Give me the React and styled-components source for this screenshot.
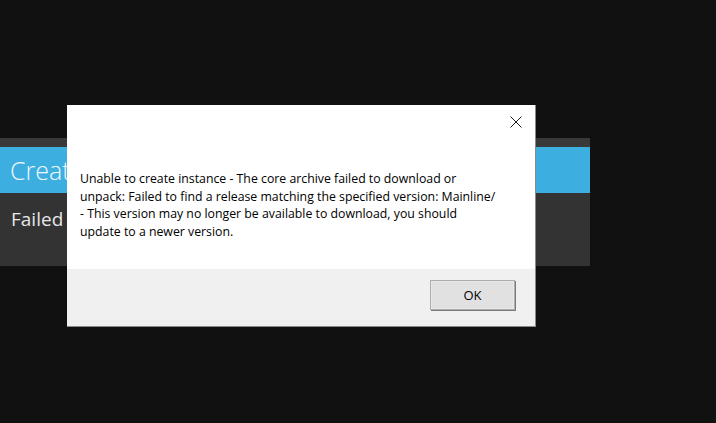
import React from "react";
import styled, { createGlobalStyle } from "styled-components";

const GlobalStyle = createGlobalStyle`
  html, body {
    margin: 0;
    padding: 0;
    background: #111111;
    overflow: hidden;
  }
`;

const Screen = styled.div`
  position: relative;
  width: 716px;
  height: 423px;
  background: #111111;
  padding-top: 138px;
  box-sizing: border-box;
`;

const Panel = styled.section`
  width: 590px;
  display: flex;
  flex-direction: column;
  font-family: "Open Sans", "Noto Sans", sans-serif;
`;

const TopStrip = styled.div`
  height: 9px;
  background: #393939;
`;

const TitleBar = styled.div`
  height: 46px;
  background: #3daee0;
  color: #eef8fd;
  font-size: 25px;
  font-weight: 300;
  line-height: 46px;
  padding-left: 10px;
  white-space: nowrap;
  overflow: hidden;
`;

const PanelBody = styled.div`
  height: 73px;
  background: #333333;
  color: #e6e6e6;
  font-size: 19px;
  padding: 14px 0 0 11px;
  box-sizing: border-box;
  line-height: 24px;
`;

const Dialog = styled.div`
  position: absolute;
  left: 67px;
  top: 105px;
  width: 469px;
  height: 222px;
  box-sizing: border-box;
  background: #ffffff;
  border-right: 1px solid #8a8a8a;
  border-bottom: 1px solid #8a8a8a;
  display: flex;
  flex-direction: column;
  font-family: "Open Sans", "Noto Sans", sans-serif;
`;

const CloseButton = styled.button`
  position: absolute;
  right: 12px;
  top: 10px;
  width: 14px;
  height: 14px;
  padding: 0;
  border: none;
  background: transparent;
  display: flex;
  align-items: center;
  justify-content: center;
`;

const Content = styled.div`
  flex: 1;
  padding: 65px 10px 0 13px;
  font-size: 12.3px;
  line-height: 17.5px;
  color: #000000;
  white-space: nowrap;
`;

const Footer = styled.div`
  height: 57px;
  background: #f0f0f0;
  display: flex;
  justify-content: flex-end;
  align-items: flex-start;
  padding: 11px 20px 0 0;
  box-sizing: border-box;
`;

const OkButton = styled.button`
  width: 85px;
  height: 30px;
  background: #e1e1e1;
  border: 1px solid #adadad;
  box-shadow: inset 0 0 0 1px #e8e8e8, 1px 1px 0 #7a7a7a;
  font-family: "Open Sans", "Noto Sans", sans-serif;
  font-size: 13px;
  color: #000;
  padding: 0;
`;

const App = () => (
  <Screen>
    <GlobalStyle />
    <Panel>
      <TopStrip />
      <TitleBar>Create</TitleBar>
      <PanelBody>Failed</PanelBody>
    </Panel>
    <Dialog>
      <CloseButton aria-label="Close">
        <svg width="12" height="12" viewBox="0 0 12 12">
          <path d="M0.5 0.5 L11.5 11.5 M11.5 0.5 L0.5 11.5" stroke="#1a1a1a" strokeWidth="1" />
        </svg>
      </CloseButton>
      <Content>
        Unable to create instance - The core archive failed to download or
        <br />
        unpack: Failed to find a release matching the specified version: Mainline/
        <br />
        - This version may no longer be available to download, you should
        <br />
        update to a newer version.
      </Content>
      <Footer>
        <OkButton>OK</OkButton>
      </Footer>
    </Dialog>
  </Screen>
);

export default App;
